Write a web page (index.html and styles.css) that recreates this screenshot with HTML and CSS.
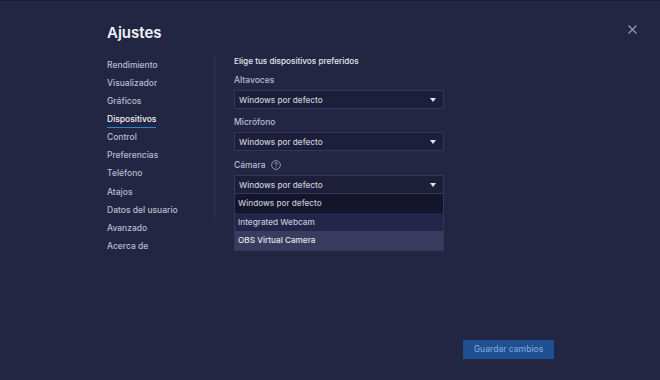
FILE: index.html
```html
<!DOCTYPE html>
<html lang="es">
<head>
  <meta charset="UTF-8">
  <meta name="viewport" content="width=device-width, initial-scale=1.0">
  <title>Ajustes</title>
  <link rel="stylesheet" href="styles.css">
</head>
<body>
  <div class="topline"></div>
  <button class="close-button" aria-label="Cerrar">
    <svg width="9" height="9" viewBox="0 0 9 9"><path d="M0.5 0.5L8.5 8.5M8.5 0.5L0.5 8.5" stroke="#9b9eb8" stroke-width="1.1" fill="none"/></svg>
  </button>
  <div class="settings">
    <h1 class="settings-title">Ajustes</h1>
    <div class="settings-body">
      <nav class="side-nav">
        <a class="nav-item">Rendimiento</a>
        <a class="nav-item">Visualizador</a>
        <a class="nav-item">Gráficos</a>
        <a class="nav-item active">Dispositivos</a>
        <a class="nav-item">Control</a>
        <a class="nav-item">Preferencias</a>
        <a class="nav-item">Teléfono</a>
        <a class="nav-item">Atajos</a>
        <a class="nav-item">Datos del usuario</a>
        <a class="nav-item">Avanzado</a>
        <a class="nav-item">Acerca de</a>
      </nav>
      <section class="devices">
        <h2 class="devices-heading">Elige tus dispositivos preferidos</h2>
        <div class="field">
          <label class="field-label">Altavoces</label>
          <div class="select">
            <span>Windows por defecto</span>
            <span class="arrow"></span>
          </div>
        </div>
        <div class="field">
          <label class="field-label">Micrófono</label>
          <div class="select">
            <span>Windows por defecto</span>
            <span class="arrow"></span>
          </div>
        </div>
        <div class="field">
          <label class="field-label">Cámara
            <svg class="help" width="10" height="10" viewBox="0 0 10 10">
              <circle cx="5" cy="5" r="4.4" stroke="#9b9eb8" stroke-width="0.9" fill="none"/>
              <path d="M3.6 3.9C3.6 3.1 4.2 2.6 5 2.6C5.8 2.6 6.4 3.1 6.4 3.8C6.4 4.6 5.4 4.7 5.1 5.3L5.1 5.9" stroke="#9b9eb8" stroke-width="0.9" fill="none"/>
              <circle cx="5.1" cy="7.3" r="0.55" fill="#9b9eb8"/>
            </svg>
          </label>
          <div class="select-wrap">
            <div class="select">
              <span>Windows por defecto</span>
              <span class="arrow"></span>
            </div>
            <ul class="dropdown">
              <li class="option selected">Windows por defecto</li>
              <li class="option">Integrated Webcam</li>
              <li class="option hover">OBS Virtual Camera</li>
            </ul>
          </div>
        </div>
      </section>
    </div>
    <div class="settings-footer">
      <button class="save-button">Guardar cambios</button>
    </div>
  </div>
</body>
</html>
```
FILE: styles.css
```css
html, body {
  margin: 0;
  padding: 0;
  height: 100%;
  overflow: hidden;
}

body {
  background-color: #232643;
  font-family: Inter, "Noto Sans", sans-serif;
  color: #bfc1d2;
  position: relative;
}

.topline {
  height: 1px;
  background-color: #191b31;
}

.close-button {
  position: absolute;
  top: 25px;
  right: 23px;
  width: 9px;
  height: 9px;
  padding: 0;
  border: none;
  background: none;
  display: flex;
}

.settings {
  width: 447px;
  padding: 21px 0 0 107px;
}

.settings-title {
  margin: 0;
  font-size: 15px;
  line-height: 22px;
  font-weight: 600;
  color: #f2f3f8;
}

.settings-body {
  display: flex;
  margin-top: 12px;
}

.side-nav {
  width: 107px;
  display: flex;
  flex-direction: column;
}

.nav-item {
  font-size: 8.5px;
  line-height: 18.1px;
  font-weight: 500;
  color: #b9bccd;
  align-self: flex-start;
}

.nav-item.active {
  color: #f2f3f8;
  line-height: 15px;
  padding-top: 2px;
  border-bottom: 1.1px solid #2a86dd;
}

.devices {
  flex: 1;
  align-self: flex-start;
  min-height: 166px;
  border-left: 1px solid #2e3152;
  padding-left: 19px;
}

.devices-heading {
  margin: 0;
  font-size: 8.2px;
  line-height: 11px;
  font-weight: 500;
  color: #e6e7ef;
}

.field {
  margin-top: 7px;
}

.field + .field {
  margin-top: 7px;
}

.field:last-child {
  margin-top: 8px;
}

.field-label {
  display: flex;
  align-items: center;
  gap: 5px;
  font-size: 8.5px;
  line-height: 12px;
  font-weight: 500;
  color: #b9bccd;
}

.select-wrap {
  position: relative;
}

.select {
  margin-top: 4px;
  height: 19px;
  width: 210px;
  box-sizing: border-box;
  border: 1px solid #33375a;
  background-color: #1d1f3a;
  display: flex;
  align-items: center;
  justify-content: space-between;
  padding: 0 7px 0 4px;
  font-size: 8.2px;
  font-weight: 500;
  color: #c9cbd9;
}

.arrow {
  width: 0;
  height: 0;
  border-left: 3px solid transparent;
  border-right: 3px solid transparent;
  border-top: 4px solid #e4e5ee;
}

.dropdown {
  position: absolute;
  top: 100%;
  left: 0;
  width: 210px;
  box-sizing: border-box;
  margin: 0;
  padding: 0;
  list-style: none;
  border: 1px solid #33375a;
  border-top: none;
  background-color: #23264a;
}

.option {
  height: 18.5px;
  line-height: 18.5px;
  padding-left: 3px;
  font-size: 8.2px;
  font-weight: 500;
  color: #c3c5d4;
}

.option.selected {
  background-color: #14152b;
}

.option.hover {
  background-color: #393c5e;
  color: #e2e3ec;
}

.settings-footer {
  display: flex;
  justify-content: flex-end;
  margin-top: 85px;
}

.save-button {
  width: 91px;
  height: 19px;
  border: none;
  padding: 0;
  background-color: #1d4f91;
  color: #7ea2d6;
  font-family: Inter, "Noto Sans", sans-serif;
  font-size: 8.5px;
  font-weight: 500;
}
```
